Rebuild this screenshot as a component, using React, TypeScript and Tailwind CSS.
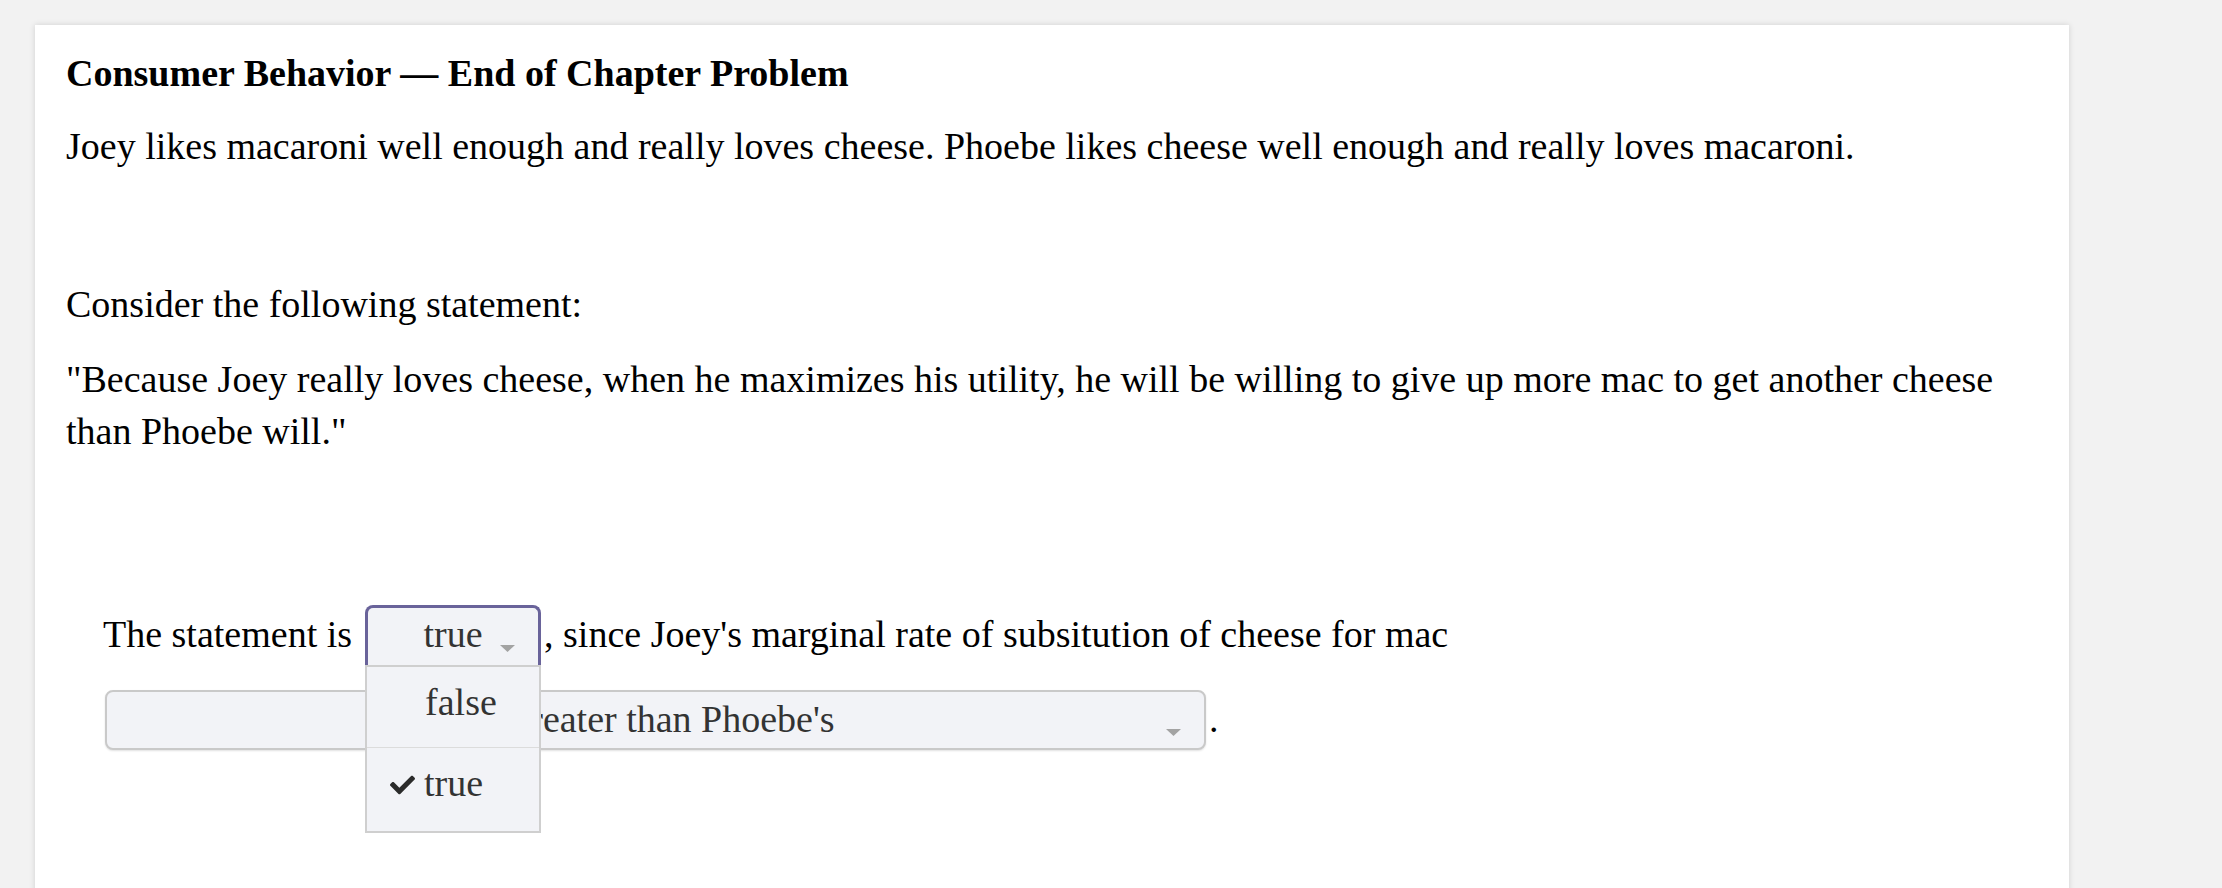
import React from 'react';

const serif = "font-['Liberation_Serif','Times_New_Roman',serif]";

function Caret() {
  return (
    <svg width="15" height="7" viewBox="0 0 15 7" className="absolute right-[23px] top-[37px]">
      <path d="M0 0H15L7.5 7Z" fill="#a3a3a3" />
    </svg>
  );
}

function Check() {
  return (
    <svg width="25" height="22" viewBox="0 0 512 448" className="mr-[9px]">
      <path
        fill="#2b2b2b"
        d="M173.898 407.404l-166.4-166.4c-9.997-9.997-9.997-26.206 0-36.204l36.203-36.204c9.997-9.998 26.207-9.998 36.204 0L192 280.69 432.095 40.596c9.997-9.997 26.207-9.997 36.204 0l36.203 36.204c9.997 9.997 9.997 26.206 0 36.204l-294.4 294.401c-9.998 9.997-26.207 9.997-36.204-.001z"
      />
    </svg>
  );
}

export default function App() {
  return (
    <div className={`min-h-screen h-[888px] overflow-hidden bg-[#f2f2f2] pt-[25px] pl-[35px] text-black ${serif}`}>
      <div className="w-[2034px] h-[900px] bg-white shadow-[0_0_6px_rgba(0,0,0,0.14)] pt-[22px] px-[31px] text-[38px] leading-[52px]">
        <h1 className="font-bold">Consumer Behavior — End of Chapter Problem</h1>

        <p className="mt-[21px]">
          Joey likes macaroni well enough and really loves cheese. Phoebe likes cheese well enough and really loves macaroni.
        </p>

        <p className="mt-[106px]">Consider the following statement:</p>

        <p className="mt-[23px]">
          "Because Joey really loves cheese, when he maximizes his utility, he will be willing to give up more mac to get another cheese than Phoebe will."
        </p>

        <div className="pl-[37px] mt-[148px]">
          {/* row 1 */}
          <div className="flex items-baseline">
            <span>The statement is</span>
            <div className="relative ml-[13px] mr-[3px] w-[176px]">
              <div className="relative h-[60px] rounded-t-[8px] border-[3px] border-b-0 border-[#69639a] bg-[#f2f3f7] text-center text-[#333] leading-[52px]">
                true
                <Caret />
              </div>
              <div className="absolute left-0 top-full z-10 w-[176px] border-2 border-[#cfcfcf] bg-[#f2f3f7] text-[#333]">
                <div className="h-[80px] pt-[9px] pl-[58px] leading-[52px]">false</div>
                <div className="h-[84px] border-t border-[#dcdcdc] pt-[9px] pl-[23px] leading-[52px] flex items-baseline">
                  <Check />
                  <span>true</span>
                </div>
              </div>
            </div>
            <span>, since Joey's marginal rate of subsitution of cheese for mac</span>
          </div>

          {/* row 2 */}
          <div className="flex items-baseline mt-[25px]">
            <div className="relative ml-[2px] w-[1101px] h-[60px] rounded-[8px] border-2 border-[#c9c9c9] bg-[#f2f3f7] text-center text-[#333] leading-[54px] shadow-[0_1px_2px_rgba(0,0,0,0.12)]">
              is greater than Phoebe's
              <Caret />
            </div>
            <span className="ml-[3px]">.</span>
          </div>
        </div>
      </div>
    </div>
  );
}
